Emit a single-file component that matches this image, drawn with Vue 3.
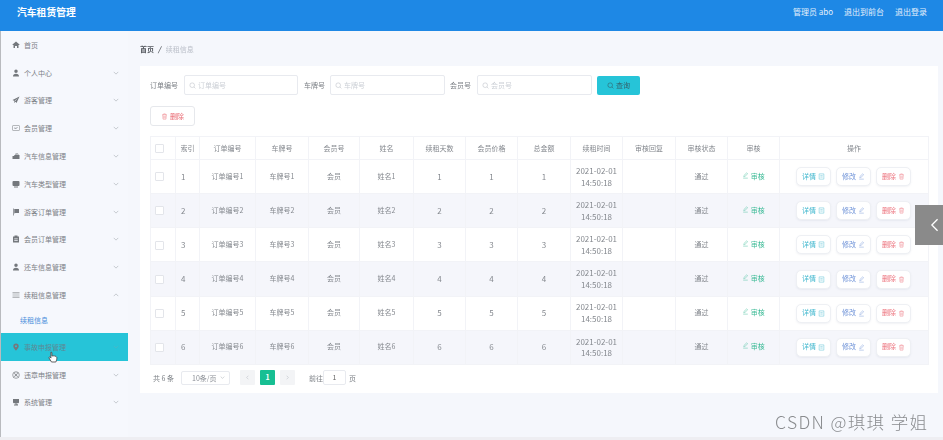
<script setup>
const icons = {
  home: 'M1 7 8 1l7 6v1h-2v6h-3v-4H6v4H3V8H1z',
  user: 'M8 1a3.4 3.4 0 1 1 0 7 3.4 3.4 0 0 1 0-7zM2 15c0-3.4 2.2-5.5 6-5.5s6 2.1 6 5.5z',
  plane: 'M15 1 1 8l4 2-1 4 3-2.4 2 2.4zM5.4 9.3 12 4 6.6 10z',
  card: 'M1 3h14v10H1zM2 4v8h12V4zM4 8l2-1 1.5 1.5L11 6l.6.6-4 3.4L6 8.4 4.4 9z',
  car: 'M1 14V8h3l1-2h2V3h5l1 3h2v8zM9 4v2h2.4L11 4z',
  monitor: 'M3 2h10a2 2 0 0 1 2 2v6a2 2 0 0 1-2 2H3a2 2 0 0 1-2-2V4a2 2 0 0 1 2-2zM4 13h8v2H4z',
  flag: 'M2 1h1.4v14H2zM4.5 2H14v8H7L4.5 11z',
  clip: 'M5 1h6v2h3v12H2V3h3zM4.5 7v1.4h7V7zm0 3v1.4h7V10z',
  list: 'M1 3h14v1.4H1zm0 4.3h14v1.4H1zm0 4.3h14V13H1z',
  pin: 'M8 1a5.4 5.4 0 0 1 5.4 5.4C13.4 10 8 15 8 15S2.6 10 2.6 6.4A5.4 5.4 0 0 1 8 1zm0 3.4a2 2 0 1 0 0 4 2 2 0 0 0 0-4z',
  ban: 'M8 1a7 7 0 1 1 0 14A7 7 0 0 1 8 1zm0 1.3a5.7 5.7 0 1 0 0 11.4A5.7 5.7 0 0 0 8 2.3zM5 4.2 8 7l3-2.8.9.9L9 8l2.9 2.9-.9.9L8 9l-3 2.8-.9-.9L7 8 4.1 5.1z',
  trophy: 'M2 2h12v6.5a2 2 0 0 1-2 2H9v2h3V15H4v-2h3v-2.500H4a2 2 0 0 1-2-2z'
}

const menu = [
  { label: '首页', icon: 'home', arrow: false },
  { label: '个人中心', icon: 'user', arrow: true },
  { label: '游客管理', icon: 'plane', arrow: true },
  { label: '会员管理', icon: 'card', arrow: true },
  { label: '汽车信息管理', icon: 'car', arrow: true },
  { label: '汽车类型管理', icon: 'monitor', arrow: true },
  { label: '游客订单管理', icon: 'flag', arrow: true },
  { label: '会员订单管理', icon: 'clip', arrow: true },
  { label: '还车信息管理', icon: 'user', arrow: true },
  { label: '续租信息管理', icon: 'list', arrow: true, open: true },
  { label: '事故申报管理', icon: 'pin', arrow: true, active: true },
  { label: '违章申报管理', icon: 'ban', arrow: true },
  { label: '系统管理', icon: 'trophy', arrow: true }
]

const columns = [
  { title: '', w: 25 }, { title: '索引', w: 24 }, { title: '订单编号', w: 56 },
  { title: '车牌号', w: 53 }, { title: '会员号', w: 51 }, { title: '姓名', w: 54 },
  { title: '续租天数', w: 52 }, { title: '会员价格', w: 52 }, { title: '总金额', w: 53 },
  { title: '续租时间', w: 52 }, { title: '审核回复', w: 53 }, { title: '审核状态', w: 52 },
  { title: '审核', w: 52 }, { title: '操作', w: 149 }
]

const rows = [1, 2, 3, 4, 5, 6]
</script>

<template>
  <div class="page">
    <div class="shell">
      <header class="topbar">
        <div class="brand">汽车租赁管理</div>
        <div class="top-links">
          <span>管理员 abo</span>
          <span>退出到前台</span>
          <span>退出登录</span>
        </div>
      </header>

      <div class="body">
        <aside class="side">
          <template v-for="m in menu" :key="m.label">
            <div class="item" :class="{ active: m.active }">
              <svg class="mi" viewBox="0 0 16 16"><path :d="icons[m.icon]" fill-rule="evenodd" /></svg>
              <span class="ml">{{ m.label }}</span>
              <svg v-if="m.arrow" class="chev" viewBox="0 0 8 5">
                <path :d="m.open ? 'M1 4 4 1l3 3' : 'M1 1l3 3 3-3'" />
              </svg>
            </div>
            <div v-if="m.open" class="sub">续租信息</div>
          </template>
        </aside>

        <main class="main">
          <div class="crumb">
            <b>首页</b><i>/</i><span>续租信息</span>
          </div>

          <section class="card">
            <div class="filters">
              <label class="l1">订单编号</label>
              <div class="field f1">
                <svg class="si" viewBox="0 0 12 12"><circle cx="5.500" cy="5.500" r="4" /><path d="m8.500 8.500 2.500 2.500" /></svg>
                <span>订单编号</span>
              </div>
              <label class="l2">车牌号</label>
              <div class="field f2">
                <svg class="si" viewBox="0 0 12 12"><circle cx="5.500" cy="5.500" r="4" /><path d="m8.500 8.500 2.500 2.500" /></svg>
                <span>车牌号</span>
              </div>
              <label class="l3">会员号</label>
              <div class="field f3">
                <svg class="si" viewBox="0 0 12 12"><circle cx="5.500" cy="5.500" r="4" /><path d="m8.500 8.500 2.500 2.500" /></svg>
                <span>会员号</span>
              </div>
              <button class="query">
                <svg class="si dark" viewBox="0 0 12 12"><circle cx="5.500" cy="5.500" r="4" /><path d="m8.500 8.500 2.500 2.500" /></svg>
                查询
              </button>
            </div>

            <button class="del-main">
              <svg class="ti" viewBox="0 0 12 12"><path d="M2 3h8M4.500 3V1.500h3V3M3 3l.5 7.500h5L9 3M5 5v4M7 5v4" /></svg>
              删除
            </button>

            <table class="grid">
              <colgroup>
                <col v-for="c in columns" :key="c.title" :style="{ width: c.w + 'px' }" />
              </colgroup>
              <thead>
                <tr>
                  <th v-for="(c, i) in columns" :key="c.title">
                    <span v-if="i === 0" class="check"></span>
                    <template v-else>{{ c.title }}</template>
                  </th>
                </tr>
              </thead>
              <tbody>
                <tr v-for="n in rows" :key="n">
                  <td><span class="check"></span></td>
                  <td class="left num">{{ n }}</td>
                  <td>订单编号{{ n }}</td>
                  <td>车牌号{{ n }}</td>
                  <td>会员</td>
                  <td>姓名{{ n }}</td>
                  <td class="num">{{ n }}</td>
                  <td class="num">{{ n }}</td>
                  <td class="num">{{ n }}</td>
                  <td class="num">2021-02-01<br />14:50:18</td>
                  <td></td>
                  <td>通过</td>
                  <td class="audit">
                    <svg class="ti" viewBox="0 0 12 12"><path d="M2 10.500h8M3 8l.3-2L8 1.500 9.700 3 5 7.700z" /></svg>
                    审核
                  </td>
                  <td>
                    <div class="ops">
                      <span class="op info">详情
                        <svg class="ti" viewBox="0 0 12 12"><path d="M2 1.500h8v9H2zM4 4.500h4M4 7h4" /></svg>
                      </span>
                      <span class="op edit">修改
                        <svg class="ti" viewBox="0 0 12 12"><path d="M2 10.500h8M3 8l.3-2L8 1.500 9.700 3 5 7.700z" /></svg>
                      </span>
                      <span class="op danger">删除
                        <svg class="ti" viewBox="0 0 12 12"><path d="M2 3h8M4.500 3V1.500h3V3M3 3l.5 7.500h5L9 3M5 5v4M7 5v4" /></svg>
                      </span>
                    </div>
                  </td>
                </tr>
              </tbody>
            </table>

            <div class="pager">
              <span class="total">共 6 条</span>
              <div class="size">10条/页
                <svg class="pchev" viewBox="0 0 8 5"><path d="M1 1l3 3 3-3" /></svg>
              </div>
              <span class="pbtn">
                <svg class="parrow" viewBox="0 0 5 8"><path d="M4 1 1 4l3 3" /></svg>
              </span>
              <span class="pnum">1</span>
              <span class="pbtn">
                <svg class="parrow" viewBox="0 0 5 8"><path d="m1 1 3 3-3 3" /></svg>
              </span>
              <span class="goto">前往</span>
              <span class="jump">1</span>
              <span class="unit">页</span>
            </div>
          </section>
        </main>
      </div>

      <div class="foot"></div>

      <svg class="hand" viewBox="0 0 12 15">
        <path d="M3.500 1.500c.8 0 1.200.5 1.200 1.200v3.600c1.500-.4 5.300-.3 5.800 1.500.4 1.600-.3 4-1.100 5.700H4.200L1.300 8.800c-.5-.8.600-1.700 1.300-1l.9 1V2.700c0-.7 0-1.200 0-1.200z" />
      </svg>
    </div>

    <div class="tab">
      <svg viewBox="0 0 10 16"><path d="M8.500 1.500 2 8l6.500 6.500" /></svg>
    </div>
    <div class="mark">CSDN @琪琪 学姐</div>
  </div>
</template>

<style scoped>
.page {
  position: relative;
  width: 943px;
  height: 440px;
  overflow: hidden;
  background: #f5f7fc;
  font-family: "Noto Sans CJK SC", "Noto Sans", sans-serif;
  font-size: 7px;
  color: #7c8086;
}
.shell {
  position: relative;
  height: 100%;
  display: flex;
  flex-direction: column;
  filter: blur(0.6px);
}
.topbar {
  flex: none;
  height: 31px;
  background: #1e88e5;
  color: #e3effb;
  display: flex;
  align-items: center;
  justify-content: space-between;
  padding: 0 16px 0 17px;
}
.brand {
  font-size: 9.800px;
  font-weight: 700;
  color: #fff;
  margin-top: -7px;
  line-height: 14px;
}
.top-links {
  display: flex;
  gap: 11px;
  font-size: 8px;
  margin-top: -8px;
}
.body {
  flex: 1;
  display: flex;
  min-height: 0;
}
.foot {
  flex: none;
  height: 3px;
  background: #eeeef2;
}
.side {
  flex: none;
  width: 128px;
  border-left: 1px solid #b9bbbf;
  box-sizing: border-box;
  background: #f6f8fd;
}
.item {
  height: 27.800px;
  display: flex;
  align-items: center;
  padding-left: 11px;
  color: #7c8086;
}
.item.active {
  background: #26c4d8;
  color: #5d8a96;
}
.mi {
  width: 8px;
  height: 8px;
  fill: #74787d;
  flex: none;
}
.ml {
  margin-left: 4px;
}
.chev {
  width: 6px;
  height: 4px;
  margin-left: auto;
  margin-right: 9px;
  fill: none;
  stroke: #b7bbc1;
  stroke-width: 1;
}
.active .chev {
  stroke: #52b4c3;
}
.sub {
  height: 24px;
  line-height: 23px;
  padding-left: 19px;
  color: #4a8fdc;
}
.main {
  flex: 1;
  min-width: 0;
  padding: 0 5px 0 12px;
}
.crumb {
  height: 35px;
  display: flex;
  align-items: center;
  color: #bcc1ca;
}
.crumb b {
  color: #55595f;
  font-weight: 700;
}
.crumb i {
  margin: 0 5px 0 4px;
  color: #55595f;
  font-weight: 700;
}
.card {
  background: #fff;
  height: 327px;
  box-sizing: border-box;
  padding: 9px 10px 0;
}
.filters {
  display: flex;
  align-items: center;
  height: 20px;
}
.l1 { width: 34px; }
.l2 { margin-left: 6px; width: 26px; }
.l3 { margin-left: 5px; width: 27px; }
.field {
  box-sizing: border-box;
  height: 20px;
  border: 1px solid #e8eaef;
  border-radius: 2px;
  display: flex;
  align-items: center;
  padding-left: 4px;
  color: #ccd0d6;
  gap: 2px;
}
.f1 { width: 114px; }
.f2 { width: 115px; }
.f3 { width: 115px; }
.si {
  width: 7px;
  height: 7px;
  fill: none;
  stroke: #bfc3ca;
  stroke-width: 1;
  flex: none;
}
.si.dark {
  stroke: #35606a;
}
.query {
  margin-left: 5px;
  width: 43px;
  height: 19px;
  border: 0;
  border-radius: 2px;
  background: #26c4d8;
  color: #35606a;
  font: inherit;
  display: flex;
  align-items: center;
  justify-content: center;
  gap: 2px;
  padding: 0;
}
.del-main {
  display: flex;
  align-items: center;
  justify-content: center;
  gap: 2px;
  width: 45px;
  height: 20px;
  margin-top: 11px;
  padding: 0;
  background: #fff;
  border: 1px solid #e6e8ec;
  border-radius: 3px;
  color: #e8646d;
  font: inherit;
}
.ti {
  width: 7px;
  height: 7px;
  fill: none;
  stroke: currentColor;
  stroke-width: 1;
  opacity: 0.75;
  flex: none;
}
.grid {
  table-layout: fixed;
  width: 778px;
  margin-top: 10px;
  border-collapse: collapse;
}
.grid th,
.grid td {
  border: 1px solid #f2f3f7;
  padding: 0;
  text-align: center;
  font-weight: 400;
  color: #85898f;
}
.grid th {
  height: 22px;
}
.grid th .check,
.grid td .check {
  margin-right: 7px;
}
.grid td {
  height: 33.170px;
  line-height: 11.800px;
}
.grid td.num {
  font-size: 8px;
}
.grid tbody tr:nth-child(even) td {
  background: #f5f6fb;
}
.grid td.left {
  text-align: left;
  padding-left: 5px;
}
.grid td.audit {
  color: #3dbb97;
}
.check {
  display: inline-block;
  vertical-align: middle;
  width: 7px;
  height: 7px;
  background: #fff;
  border: 1px solid #e3e5ea;
  border-radius: 1px;
}
.ops {
  display: flex;
  justify-content: center;
  gap: 5px;
  padding-right: 1px;
}
.op {
  box-sizing: border-box;
  width: 35px;
  height: 19px;
  background: #fff;
  border: 1px solid #eef0f4;
  border-radius: 5px;
  box-shadow: 0 1px 2px rgba(120, 130, 160, 0.1);
  display: flex;
  align-items: center;
  justify-content: center;
  gap: 2px;
}
.op.info { color: #43b8cf; }
.op.edit { color: #6f93d8; }
.op.danger { color: #ec6f7a; }
.pager {
  display: flex;
  align-items: center;
  height: 14px;
  margin-top: 6px;
  padding-left: 3px;
}
.total { width: 28px; }
.size {
  box-sizing: border-box;
  width: 49px;
  height: 14px;
  border: 1px solid #e8eaef;
  border-radius: 2px;
  display: flex;
  align-items: center;
  padding-left: 10px;
  color: #8a8e95;
}
.pchev {
  width: 5px;
  height: 3px;
  margin-left: auto;
  margin-right: 4px;
  fill: none;
  stroke: #b7bbc1;
}
.pbtn {
  width: 15px;
  height: 15px;
  background: #f3f4f6;
  border-radius: 1px;
  margin-left: 10px;
  display: flex;
  align-items: center;
  justify-content: center;
}
.pbtn + .pnum { margin-left: 5px; }
.pnum + .pbtn { margin-left: 5px; }
.parrow {
  width: 3px;
  height: 5px;
  fill: none;
  stroke: #bfc3ca;
}
.pnum {
  width: 15px;
  height: 15px;
  background: #17bf93;
  color: #fff;
  font-weight: 700;
  border-radius: 1px;
  text-align: center;
  line-height: 15px;
}
.goto { margin-left: 14px; width: 14px; }
.jump {
  box-sizing: border-box;
  width: 23px;
  height: 15px;
  border: 1px solid #e8eaef;
  border-radius: 2px;
  text-align: center;
  line-height: 13px;
  color: #666;
}
.unit { margin-left: 3px; }
.hand {
  position: absolute;
  left: 48px;
  top: 350px;
  width: 10px;
  height: 14px;
  fill: #fff;
  stroke: #444;
  stroke-width: 1;
}
.tab {
  position: absolute;
  left: 915px;
  top: 205px;
  width: 28px;
  height: 40px;
  background: #8a8a8a;
  display: flex;
  align-items: center;
  justify-content: flex-end;
  padding-right: 4px;
  box-sizing: border-box;
  filter: blur(0.4px);
}
.tab svg {
  width: 9px;
  height: 14px;
  fill: none;
  stroke: #fff;
  stroke-width: 1.500;
}
.mark {
  position: absolute;
  left: 775px;
  top: 409px;
  font-size: 17.500px;
  letter-spacing: 1.350px;
  font-weight: 300;
  line-height: 26px;
  color: #8a8c8f;
  white-space: nowrap;
  filter: blur(0.3px);
}
</style>
